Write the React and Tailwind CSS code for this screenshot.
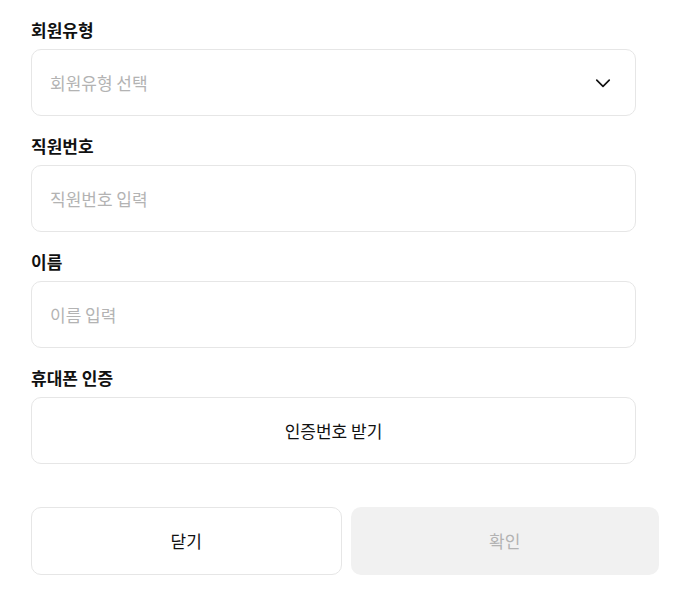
import React from 'react';

const font = { fontFamily: '"Noto Sans CJK KR", "Noto Sans", sans-serif' };

const Field = ({ label, children }) => (
  <div className="flex flex-col gap-[7px]">
    <label className="text-[17px] leading-[24px] font-bold text-[#111]">{label}</label>
    {children}
  </div>
);

const TextBox = ({ placeholder }) => (
  <input
    type="text"
    placeholder={placeholder}
    className="h-[67px] w-full rounded-[10px] border border-[#e6e6e6] bg-white px-[18px] text-[17px] text-[#111] outline-none placeholder:text-[#b3b3b3]"
  />
);

export default function App() {
  return (
    <div className="min-h-[597px] bg-white pt-[18px] pl-[31px] pr-[15px]" style={font}>
      <div className="flex w-[605px] flex-col gap-[18px]">
        <Field label="회원유형">
          <button className="flex h-[67px] w-full items-center justify-between rounded-[10px] border border-[#e6e6e6] bg-white pl-[18px] pr-[22px] text-[17px] text-[#b3b3b3]">
            <span>회원유형 선택</span>
            <svg width="20" height="20" viewBox="0 0 24 24" fill="none" stroke="#111" strokeWidth="2" strokeLinecap="round" strokeLinejoin="round">
              <path d="M4.5 8.5l7.5 7.5 7.5-7.5" />
            </svg>
          </button>
        </Field>
        <Field label="직원번호">
          <TextBox placeholder="직원번호 입력" />
        </Field>
        <Field label="이름">
          <TextBox placeholder="이름 입력" />
        </Field>
        <Field label="휴대폰 인증">
          <button className="h-[67px] w-full rounded-[10px] border border-[#e6e6e6] bg-white text-[17px] text-[#111]">
            인증번호 받기
          </button>
        </Field>
      </div>
      <div className="mt-[43px] flex w-[628px] gap-[9px]">
        <button className="h-[68px] flex-1 rounded-[10px] border border-[#e6e6e6] bg-white text-[17px] text-[#111]">
          닫기
        </button>
        <button disabled className="h-[68px] flex-1 rounded-[10px] bg-[#f1f1f1] text-[17px] text-[#b3b3b3]">
          확인
        </button>
      </div>
    </div>
  );
}
